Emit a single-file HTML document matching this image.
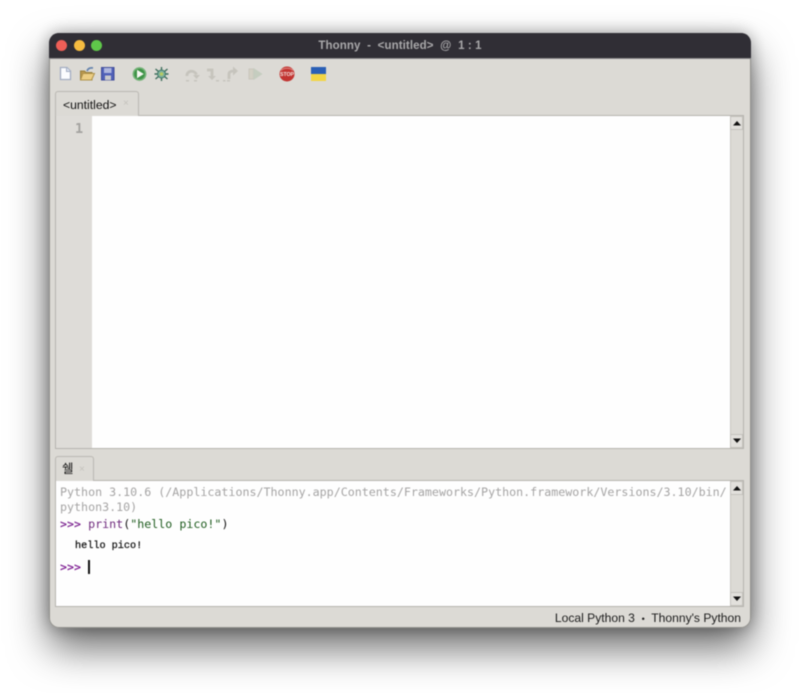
<!DOCTYPE html>
<html>
<head>
<meta charset="utf-8">
<style>
html,body{margin:0;padding:0;background:#fff;width:800px;height:693px;overflow:hidden}
*{box-sizing:border-box}
.a{position:absolute}
#all{position:absolute;left:0;top:0;width:800px;height:693px;filter:blur(.4px)}
#win{left:49px;top:33px;width:702px;height:595px;border-radius:10px;background:#dcdad5;box-shadow:0 20px 40px rgba(0,0,0,.58),0 0 16px rgba(0,0,0,.32)}
#clip{left:49px;top:33px;width:702px;height:595px;border-radius:10px;overflow:hidden;border:1px solid #93928e;border-top-color:#2e2d33}
#title{left:49px;top:33px;width:702px;height:26px;border-radius:10px 10px 0 0;background:#302e35;border-bottom:1px solid #8a898a}
.dot{width:11px;height:11px;border-radius:50%;top:40px}
#ttext{left:49px;top:38px;width:702px;text-align:center;font:bold 11.5px/15px "Liberation Sans",sans-serif;color:#a9a8aa;letter-spacing:.1px;white-space:pre}
.tab{background:#dcdad5;border:1px solid #b9b7b2;border-bottom:none;border-radius:3px 3px 0 0}
.frame{background:#fefefe;border:1px solid #b6b4af}
.sb{background:#dcdad5;border-left:1px solid #c8c6c1}
.btn{width:13px;height:14px;background:#e2e0dc;border:1px solid #c4c2bd}
.mono{font-family:"DejaVu Sans Mono","Liberation Mono",monospace;font-size:11.67px;line-height:15px;white-space:pre}
.x{font:10px/10px "Liberation Sans",sans-serif;color:#c4c2bd}
</style>
</head>
<body>
<div id="all">
<div id="win" class="a"></div>
<div id="clip" class="a"></div>
<div id="title" class="a"></div>
<div class="a dot" style="left:56px;background:#ef5f57"></div>
<div class="a dot" style="left:74px;background:#f6bc40"></div>
<div class="a dot" style="left:91px;background:#5fc84a"></div>
<div id="ttext" class="a" style="top:38.500px">Thonny  -  &lt;untitled&gt;  @  1 : 1</div>

<svg class="a" style="left:55px;top:62px" width="290" height="24" viewBox="0 0 290 24">
  <!-- new -->
  <path d="M5.500 5.500h6.500l3.500 3.500V17.500H5.500z" fill="#fbfcfe" stroke="#a3adc2" stroke-width="1.300"/>
  <path d="M11.500 5.500V9.500H15.500" fill="#dfe5f2" stroke="#a3adc2"/>
  <!-- open -->
  <path d="M25.500 9h4l1.500 1.500H37V18H25.500z" fill="#b8964c" stroke="#97803f"/>
  <path d="M25.500 18l2.500-6.500h11.500l-3 6.500z" fill="#ecce84" stroke="#b0934a"/>
  <path d="M32 9c1-2.500 3-3.500 6-3" fill="none" stroke="#6583ad" stroke-width="1.800"/>
  <!-- save -->
  <rect x="46.500" y="5.500" width="12.500" height="12.500" fill="#5060b8" stroke="#3f4b99"/>
  <rect x="49" y="6" width="7.500" height="5" fill="#aeb6de"/>
  <rect x="50" y="13.500" width="6" height="4.500" fill="#c9c9cc"/>
  <!-- run -->
  <circle cx="84.500" cy="12" r="6.800" fill="#3f9347"/>
  <circle cx="84.500" cy="12" r="6" fill="none" stroke="#79b77c" stroke-width="1.200"/>
  <path d="M82 7.800L88.800 12 82 16.200z" fill="#f6f7f2"/>
  <!-- debug -->
  <path d="M100.500 7l12 10M112.500 7l-12 10M106.500 5v14M99.500 12h14" stroke="#3e6c5b" stroke-width="1.400"/>
  <circle cx="106.500" cy="12" r="4" fill="#7fb0a0" stroke="#3f7a66"/>
  <circle cx="106.500" cy="12" r="1.800" fill="#b6cb62"/>
  <!-- step icons -->
  <g fill="none" stroke="#c6c4bd" stroke-width="2.800">
    <path d="M132 14c-.5-5.500 7-6.500 9.500-1.500"/>
    <path d="M152 8h5v7"/>
    <path d="M174 17v-5c0-2 2-3 5.500-3"/>
  </g>
  <g fill="#c6c4bd">
    <path d="M138 13h7l-3.500 4z"/>
    <path d="M153 14h8l-4 4z"/>
    <path d="M178 4.500l5 4.500-5 4.500z"/>
    <rect x="131" y="18" width="3" height="1.500"/>
    <rect x="139" y="18" width="3" height="1.500"/>
    <rect x="161" y="18" width="3" height="1.500"/>
    <rect x="172" y="18" width="3" height="1.500"/>
    <rect x="168" y="18" width="2.500" height="1.500"/>
  </g>
  <rect x="194" y="7" width="4.500" height="10" fill="#d3d0c4" stroke="#c9c6bc"/>
  <path d="M198.500 6L207.500 12l-9 6z" fill="#c5cdbf"/>
  <!-- stop -->
  <circle cx="232" cy="12" r="7.500" fill="#c23431"/>
  <path d="M226 8.500c3-3 9-3 12 0" fill="none" stroke="#e08a84" stroke-width="1"/>
  <text x="232" y="13.800" font-family="Liberation Sans, sans-serif" font-size="5.200" font-weight="bold" fill="#f4e4e0" text-anchor="middle">STOP</text>
  <!-- flag -->
  <rect x="256" y="5" width="15" height="7" fill="#2a5fb5"/>
  <rect x="256" y="12" width="15" height="7" fill="#f2d544"/>
</svg>

<!-- editor -->
<div class="a frame" style="left:55px;top:115px;width:689px;height:334px"></div>
<div class="a" style="left:56px;top:116px;width:36px;height:332px;background:#dedcd8"></div>
<div class="a" style="left:75px;top:120.500px;font:bold 13.500px/16px 'DejaVu Sans Mono',monospace;color:#a3a29f">1</div>
<div class="a tab" style="left:55px;top:91px;width:84px;height:25px"></div>
<div class="a" style="left:63px;top:97.500px;font:12.200px/14px 'Liberation Sans',sans-serif;color:#111">&lt;untitled&gt;</div>
<div class="a x" style="left:123px;top:99px">×</div>
<div class="a sb" style="left:730px;top:116px;width:13px;height:332px"></div>
<div class="a btn" style="left:730px;top:116px"></div>
<div class="a btn" style="left:730px;top:434px"></div>
<svg class="a" style="left:730px;top:116px" width="14" height="332">
  <path d="M3 9.500h8L7 5z" fill="#111"/>
  <path d="M3 322.500h8l-4 4.500z" fill="#111"/>
</svg>

<!-- shell -->
<div class="a frame" style="left:55px;top:480px;width:689px;height:127px"></div>
<div class="a tab" style="left:55px;top:456px;width:39px;height:25px"></div>
<div class="a" style="left:62px;top:460px;font:12.500px/16px 'Noto Sans CJK KR','NanumGothic',sans-serif;color:#111">쉘</div>
<div class="a x" style="left:79px;top:465px">×</div>
<div class="a sb" style="left:730px;top:481px;width:13px;height:125px"></div>
<div class="a btn" style="left:730px;top:481px"></div>
<div class="a btn" style="left:730px;top:592px"></div>
<svg class="a" style="left:730px;top:481px" width="14" height="125">
  <path d="M3 9.500h8L7 5z" fill="#111"/>
  <path d="M3 115.500h8l-4 4.500z" fill="#111"/>
</svg>
<div class="a mono" style="left:60px;top:485px;color:#a5a4a4">Python 3.10.6 (/Applications/Thonny.app/Contents/Frameworks/Python.framework/Versions/3.10/bin/
python3.10)</div>
<div class="a mono" style="left:60px;top:517px;color:#111"><span style="color:#7f2a93;font-weight:bold">&gt;&gt;&gt;</span> <span style="color:#6f2b7d">print</span>(<span style="color:#1f5c1f">"hello pico!"</span>)</div>
<div class="a" style="left:75px;top:539.500px;font:10.200px/13px 'Liberation Mono',monospace;color:#111;-webkit-text-stroke:.25px #111;white-space:pre">hello pico!</div>
<div class="a mono" style="left:60px;top:560px;color:#7f1f93;font-weight:bold">&gt;&gt;&gt;</div>
<div class="a" style="left:88px;top:560px;width:2px;height:14px;background:#111"></div>

<!-- status -->
<div class="a" style="right:59px;top:611px;font:12.100px/15px 'Liberation Sans',sans-serif;color:#1c1c1c;white-space:pre">Local Python 3  <span style="font-size:9px">•</span>  Thonny's Python</div>
</div>
</body>
</html>
